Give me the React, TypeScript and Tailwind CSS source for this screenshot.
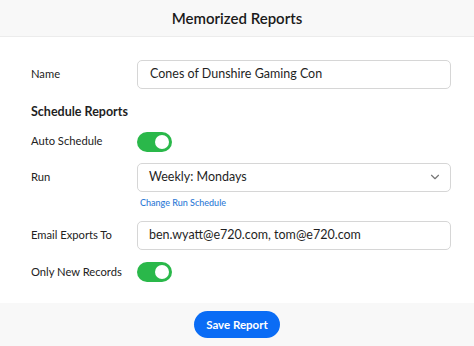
import { ChevronDown } from "lucide-react";

function Toggle() {
  return (
    <div className="flex h-[20px] w-[35px] items-center justify-end rounded-full bg-[#2ab84a] px-[3px]">
      <div className="h-[14px] w-[14px] rounded-full bg-white" />
    </div>
  );
}

function Row({ label, children, className = "" }: { label: string; children: React.ReactNode; className?: string }) {
  return (
    <div className={"flex items-center " + className}>
      <div className="w-[106px] shrink-0 text-[11.2px] text-[#222]">{label}</div>
      {children}
    </div>
  );
}

export default function App() {
  return (
    <div className="flex h-[346px] w-[474px] flex-col bg-white font-['Lato',sans-serif] text-[#1f1f1f]">
      <div className="flex h-[37px] items-center justify-center border-b border-[#ececec] bg-[#f8f8f8]">
        <h1 className="text-[15px] font-semibold text-[#1a1a1a]">Memorized Reports</h1>
      </div>

      <div className="flex-1 pl-[31px] pr-[23px] pt-[23px]">
        <Row label="Name">
          <div className="flex h-[29px] flex-1 items-center rounded-[5px] border border-[#d6d6d6] px-[12px] text-[12.5px]">
            Cones of Dunshire Gaming Con
          </div>
        </Row>

        <div className="mt-[14px] text-[12.5px] font-bold">Schedule Reports</div>

        <Row label="Auto Schedule" className="mt-[10px]">
          <Toggle />
        </Row>

        <Row label="Run" className="mt-[11px]">
          <div className="flex h-[29px] flex-1 items-center justify-between rounded-[5px] border border-[#d6d6d6] pl-[11px] pr-[8px] text-[12.5px]">
            <span>Weekly: Mondays</span>
            <ChevronDown size={14} strokeWidth={2} className="text-[#777]" />
          </div>
        </Row>

        <div className="ml-[109px] mt-[4px] text-[9px] font-medium text-[#2d7ad6]">Change Run Schedule</div>

        <Row label="Email Exports To" className="mt-[12px]">
          <div className="flex h-[29px] flex-1 items-center rounded-[5px] border border-[#d6d6d6] px-[11px] text-[12.5px]">
            ben.wyatt@e720.com, tom@e720.com
          </div>
        </Row>

        <Row label="Only New Records" className="mt-[12px]">
          <Toggle />
        </Row>
      </div>

      <div className="flex h-[43px] items-center justify-center bg-[#f8f8f8]">
        <button className="h-[27px] w-[86px] rounded-full bg-[#0a6cf5] text-[11.5px] font-bold text-white">
          Save Report
        </button>
      </div>
    </div>
  );
}
